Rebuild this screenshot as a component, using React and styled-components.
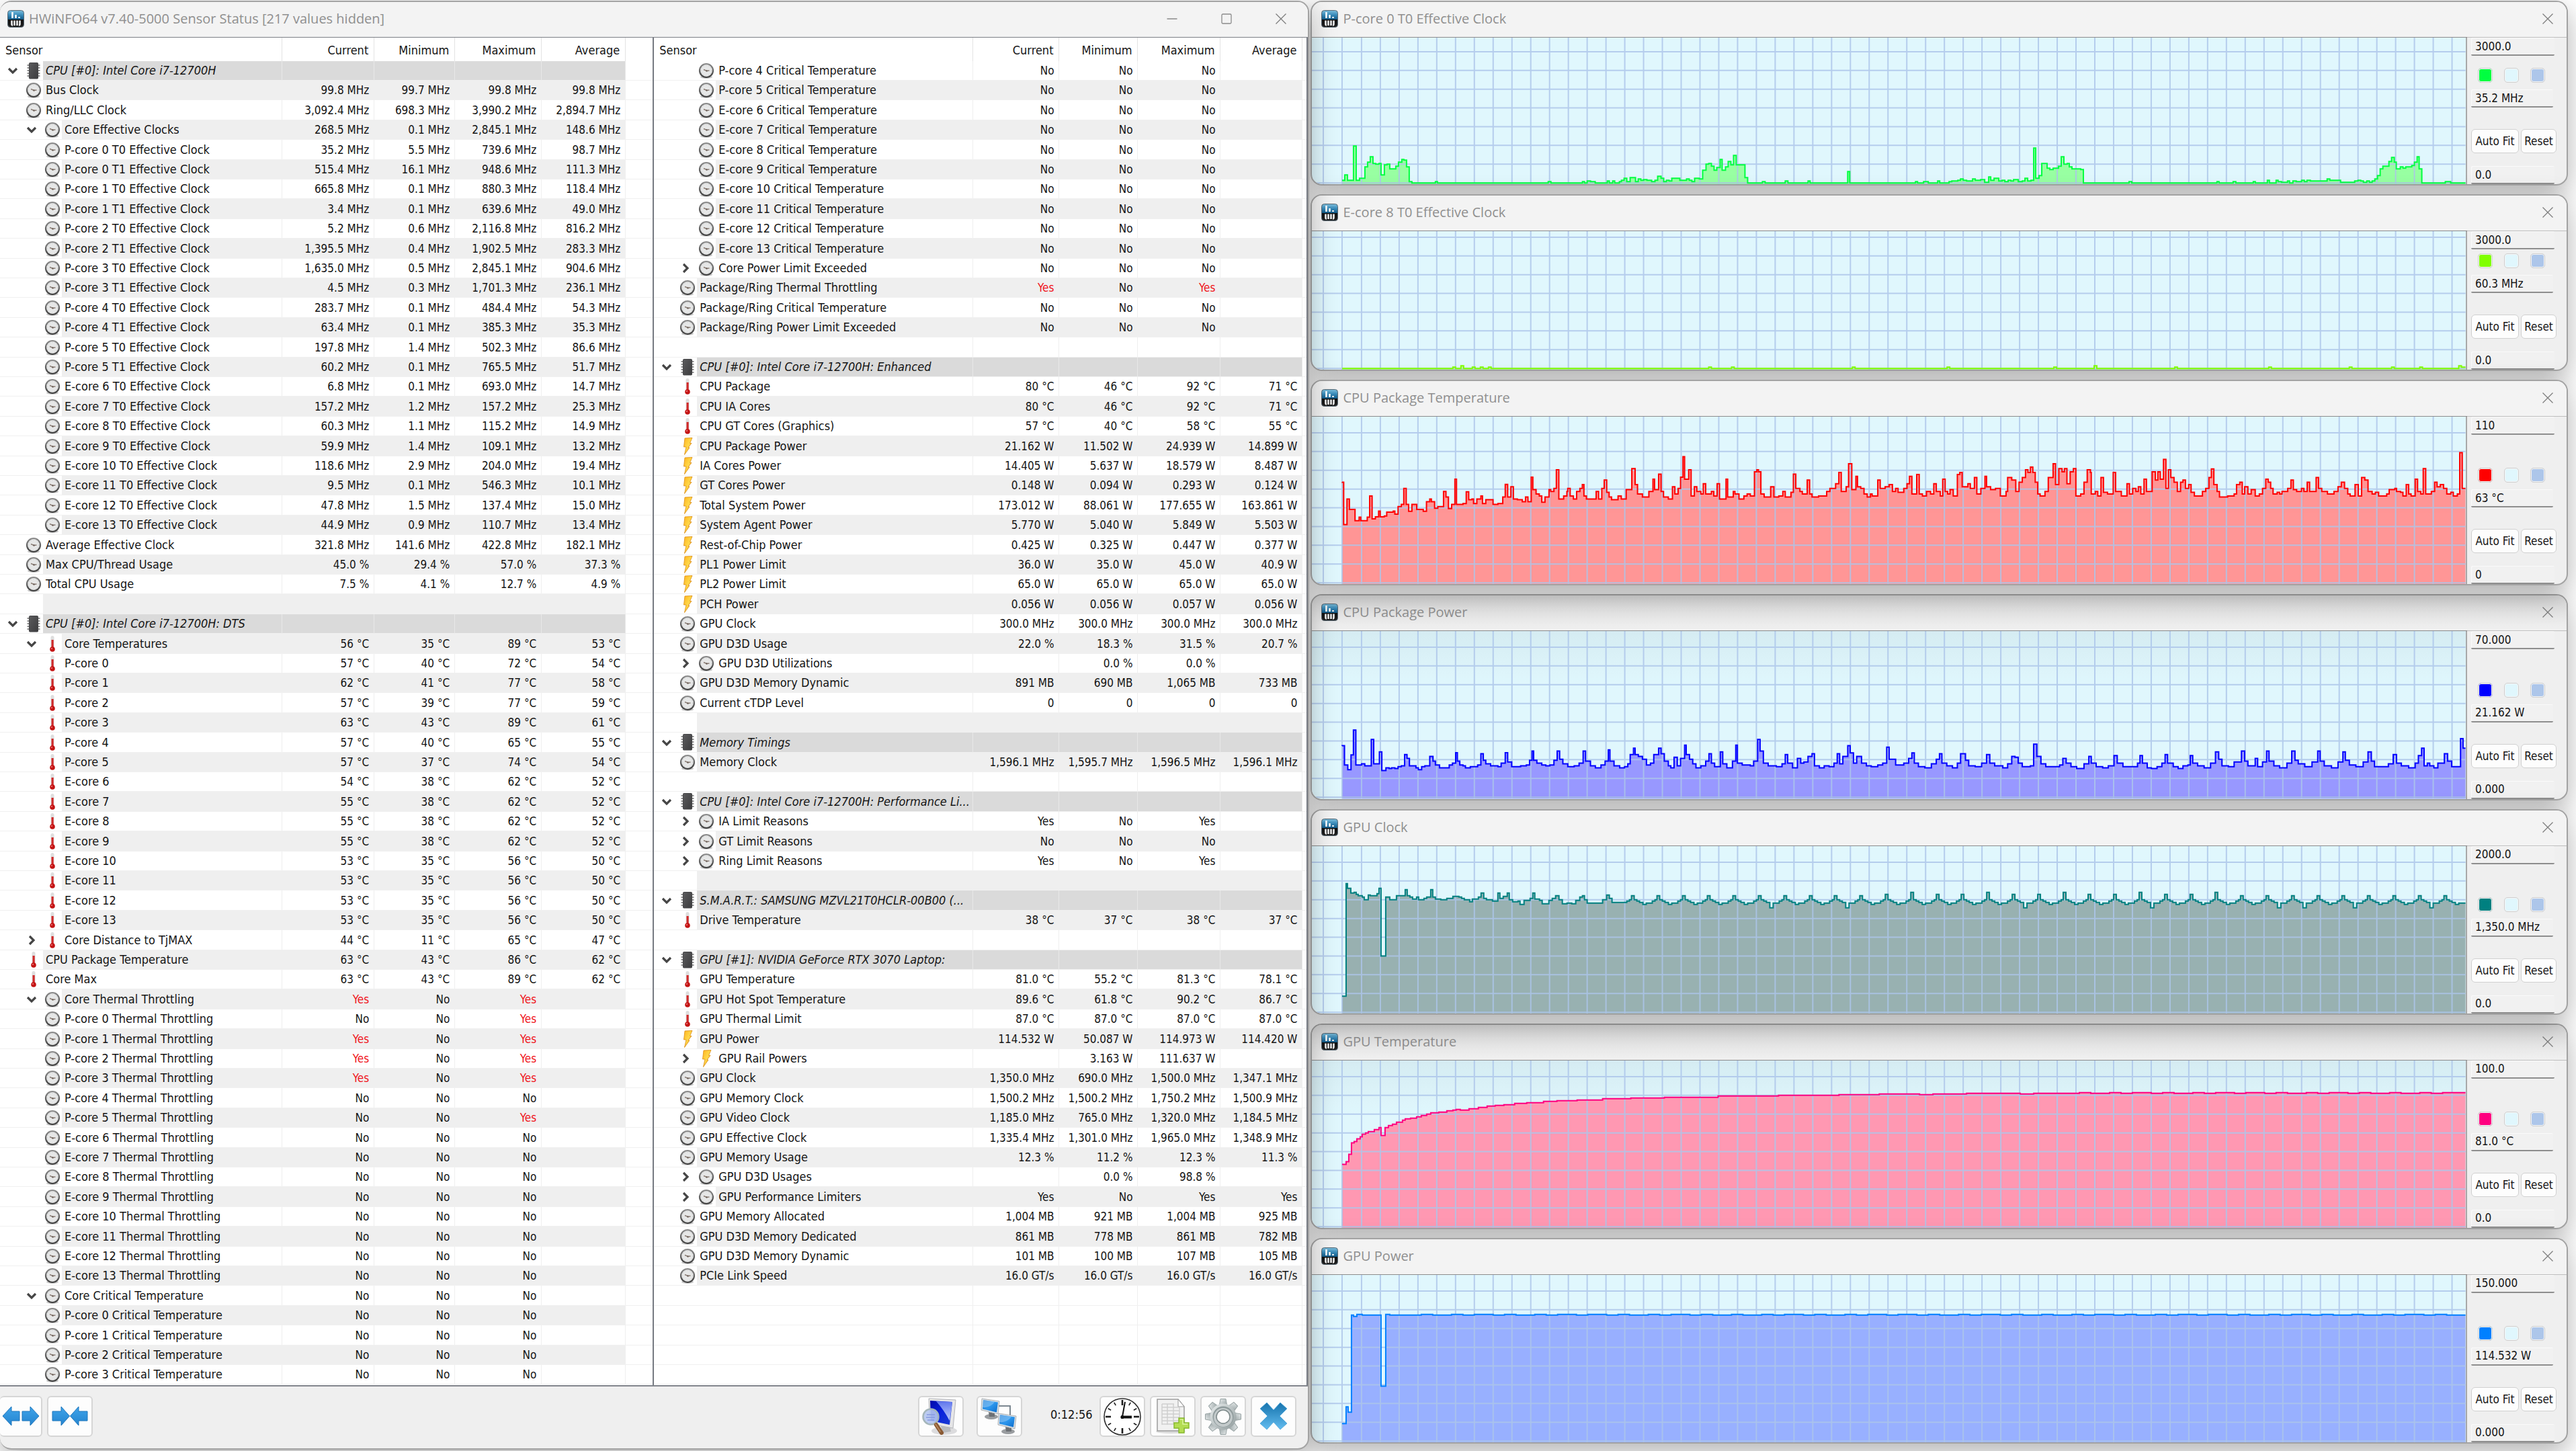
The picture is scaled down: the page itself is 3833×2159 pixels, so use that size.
import React from "react";
import styled, { createGlobalStyle, css } from "styled-components";

const GlobalStyle = createGlobalStyle`
  * {
    box-sizing: border-box;
  }

  body {
    margin: 0;
    background: #ffffff;
    color: #141414;
    font-family: "DejaVu Sans Condensed", "DejaVu Sans", Tahoma, sans-serif;
    font-size: 17px;
  }

  button, input {
    font: inherit;
    color: inherit;
  }
`;

// ---------- Data ----------

const mhz = (...v) => v.map((n) => `${n} MHz`);
const deg = (...v) => v.map((n) => `${n} °C`);
const pct = (...v) => v.map((n) => `${n} %`);
const watt = (...v) => v.map((n) => `${n} W`);
const mb = (...v) => v.map((n) => `${n} MB`);

const group = (label) => ({ kind: "group", depth: 0, icon: "chip", label, values: [], toggle: "open" });
const blank = () => ({ kind: "blank", depth: 0, values: [] });
const row = (depth, icon, label, values, toggle) => ({ kind: "row", depth, icon, label, values, toggle });
const flags = (depth, label, text, toggle) => row(depth, "clock", label, text.split(" "), toggle);

const cores = [
  "P-core 0", "P-core 1", "P-core 2", "P-core 3", "P-core 4", "P-core 5", "E-core 6",
  "E-core 7", "E-core 8", "E-core 9", "E-core 10", "E-core 11", "E-core 12", "E-core 13",
];

const effectiveClocks = [
  ["P-core 0 T0", "35.2", "5.5", "739.6", "98.7"],
  ["P-core 0 T1", "515.4", "16.1", "948.6", "111.3"],
  ["P-core 1 T0", "665.8", "0.1", "880.3", "118.4"],
  ["P-core 1 T1", "3.4", "0.1", "639.6", "49.0"],
  ["P-core 2 T0", "5.2", "0.6", "2,116.8", "816.2"],
  ["P-core 2 T1", "1,395.5", "0.4", "1,902.5", "283.3"],
  ["P-core 3 T0", "1,635.0", "0.5", "2,845.1", "904.6"],
  ["P-core 3 T1", "4.5", "0.3", "1,701.3", "236.1"],
  ["P-core 4 T0", "283.7", "0.1", "484.4", "54.3"],
  ["P-core 4 T1", "63.4", "0.1", "385.3", "35.3"],
  ["P-core 5 T0", "197.8", "1.4", "502.3", "86.6"],
  ["P-core 5 T1", "60.2", "0.1", "765.5", "51.7"],
  ["E-core 6 T0", "6.8", "0.1", "693.0", "14.7"],
  ["E-core 7 T0", "157.2", "1.2", "157.2", "25.3"],
  ["E-core 8 T0", "60.3", "1.1", "115.2", "14.9"],
  ["E-core 9 T0", "59.9", "1.4", "109.1", "13.2"],
  ["E-core 10 T0", "118.6", "2.9", "204.0", "19.4"],
  ["E-core 11 T0", "9.5", "0.1", "546.3", "10.1"],
  ["E-core 12 T0", "47.8", "1.5", "137.4", "15.0"],
  ["E-core 13 T0", "44.9", "0.9", "110.7", "13.4"],
];

const coreTemps = [
  [57, 40, 72, 54], [62, 41, 77, 58], [57, 39, 77, 59], [63, 43, 89, 61], [57, 40, 65, 55],
  [57, 37, 74, 54], [54, 38, 62, 52], [55, 38, 62, 52], [55, 38, 62, 52], [55, 38, 62, 52],
  [53, 35, 56, 50], [53, 35, 56, 50], [53, 35, 56, 50], [53, 35, 56, 50],
];

const throttling = ["No No Yes", "Yes No Yes", "Yes No Yes", "Yes No Yes", "No No No", "No No Yes"];

const leftRows = [
  group("CPU [#0]: Intel Core i7-12700H"),
  row(0, "clock", "Bus Clock", mhz("99.8", "99.7", "99.8", "99.8")),
  row(0, "clock", "Ring/LLC Clock", mhz("3,092.4", "698.3", "3,990.2", "2,894.7")),
  row(1, "clock", "Core Effective Clocks", mhz("268.5", "0.1", "2,845.1", "148.6"), "open"),
  ...effectiveClocks.map(([name, ...v]) => row(1, "clock", `${name} Effective Clock`, mhz(...v))),
  row(0, "clock", "Average Effective Clock", mhz("321.8", "141.6", "422.8", "182.1")),
  row(0, "clock", "Max CPU/Thread Usage", pct("45.0", "29.4", "57.0", "37.3")),
  row(0, "clock", "Total CPU Usage", pct("7.5", "4.1", "12.7", "4.9")),
  blank(),
  group("CPU [#0]: Intel Core i7-12700H: DTS"),
  row(1, "temp", "Core Temperatures", deg(56, 35, 89, 53), "open"),
  ...cores.map((name, i) => row(1, "temp", name, deg(...coreTemps[i]))),
  row(1, "temp", "Core Distance to TjMAX", deg(44, 11, 65, 47), "closed"),
  row(0, "temp", "CPU Package Temperature", deg(63, 43, 86, 62)),
  row(0, "temp", "Core Max", deg(63, 43, 89, 62)),
  flags(1, "Core Thermal Throttling", "Yes No Yes", "open"),
  ...cores.map((name, i) => flags(1, `${name} Thermal Throttling`, throttling[i] || "No No No")),
  flags(1, "Core Critical Temperature", "No No No", "open"),
  ...cores.slice(0, 4).map((name) => flags(1, `${name} Critical Temperature`, "No No No")),
];

const rightRows = [
  ...cores.slice(4).map((name) => flags(1, `${name} Critical Temperature`, "No No No")),
  flags(1, "Core Power Limit Exceeded", "No No No", "closed"),
  flags(0, "Package/Ring Thermal Throttling", "Yes No Yes"),
  flags(0, "Package/Ring Critical Temperature", "No No No"),
  flags(0, "Package/Ring Power Limit Exceeded", "No No No"),
  blank(),
  group("CPU [#0]: Intel Core i7-12700H: Enhanced"),
  row(0, "temp", "CPU Package", deg(80, 46, 92, 71)),
  row(0, "temp", "CPU IA Cores", deg(80, 46, 92, 71)),
  row(0, "temp", "CPU GT Cores (Graphics)", deg(57, 40, 58, 55)),
  row(0, "power", "CPU Package Power", watt("21.162", "11.502", "24.939", "14.899")),
  row(0, "power", "IA Cores Power", watt("14.405", "5.637", "18.579", "8.487")),
  row(0, "power", "GT Cores Power", watt("0.148", "0.094", "0.293", "0.124")),
  row(0, "power", "Total System Power", watt("173.012", "88.061", "177.655", "163.861")),
  row(0, "power", "System Agent Power", watt("5.770", "5.040", "5.849", "5.503")),
  row(0, "power", "Rest-of-Chip Power", watt("0.425", "0.325", "0.447", "0.377")),
  row(0, "power", "PL1 Power Limit", watt("36.0", "35.0", "45.0", "40.9")),
  row(0, "power", "PL2 Power Limit", watt("65.0", "65.0", "65.0", "65.0")),
  row(0, "power", "PCH Power", watt("0.056", "0.056", "0.057", "0.056")),
  row(0, "clock", "GPU Clock", mhz("300.0", "300.0", "300.0", "300.0")),
  row(0, "clock", "GPU D3D Usage", pct("22.0", "18.3", "31.5", "20.7")),
  row(1, "clock", "GPU D3D Utilizations", ["", "0.0 %", "0.0 %", ""], "closed"),
  row(0, "clock", "GPU D3D Memory Dynamic", mb("891", "690", "1,065", "733")),
  row(0, "clock", "Current cTDP Level", ["0", "0", "0", "0"]),
  blank(),
  group("Memory Timings"),
  row(0, "clock", "Memory Clock", mhz("1,596.1", "1,595.7", "1,596.5", "1,596.1")),
  blank(),
  group("CPU [#0]: Intel Core i7-12700H: Performance Li..."),
  flags(1, "IA Limit Reasons", "Yes No Yes", "closed"),
  flags(1, "GT Limit Reasons", "No No No", "closed"),
  flags(1, "Ring Limit Reasons", "Yes No Yes", "closed"),
  blank(),
  group("S.M.A.R.T.: SAMSUNG MZVL21T0HCLR-00B00 (..."),
  row(0, "temp", "Drive Temperature", deg(38, 37, 38, 37)),
  blank(),
  group("GPU [#1]: NVIDIA GeForce RTX 3070 Laptop:"),
  row(0, "temp", "GPU Temperature", deg("81.0", "55.2", "81.3", "78.1")),
  row(0, "temp", "GPU Hot Spot Temperature", deg("89.6", "61.8", "90.2", "86.7")),
  row(0, "temp", "GPU Thermal Limit", deg("87.0", "87.0", "87.0", "87.0")),
  row(0, "power", "GPU Power", watt("114.532", "50.087", "114.973", "114.420")),
  row(1, "power", "GPU Rail Powers", ["", "3.163 W", "111.637 W", ""], "closed"),
  row(0, "clock", "GPU Clock", mhz("1,350.0", "690.0", "1,500.0", "1,347.1")),
  row(0, "clock", "GPU Memory Clock", mhz("1,500.2", "1,500.2", "1,750.2", "1,500.9")),
  row(0, "clock", "GPU Video Clock", mhz("1,185.0", "765.0", "1,320.0", "1,184.5")),
  row(0, "clock", "GPU Effective Clock", mhz("1,335.4", "1,301.0", "1,965.0", "1,348.9")),
  row(0, "clock", "GPU Memory Usage", pct("12.3", "11.2", "12.3", "11.3")),
  row(1, "clock", "GPU D3D Usages", ["", "0.0 %", "98.8 %", ""], "closed"),
  row(1, "clock", "GPU Performance Limiters", ["Yes", "No", "Yes", "Yes"], "closed"),
  row(0, "clock", "GPU Memory Allocated", mb("1,004", "921", "1,004", "925")),
  row(0, "clock", "GPU D3D Memory Dedicated", mb("861", "778", "861", "782")),
  row(0, "clock", "GPU D3D Memory Dynamic", mb("101", "100", "107", "105")),
  row(0, "clock", "PCIe Link Speed", ["16.0 GT/s", "16.0 GT/s", "16.0 GT/s", "16.0 GT/s"]),
  ...Array.from({ length: 5 }, () => ({ kind: "empty", depth: 0, values: [] })),
];

// Traces are step points "x,y" inside a frame of [left, top, right, bottom]
const parse = (text) => text.trim().split(/\s+/).map((p) => p.split(",").map(Number));

const pcoreTrace = parse(`
0,4 4,12 8,4 17,55 21,4 26,7 34,24 38,31 42,39 46,29 50,28 55,29 58,12 63,27 67,28 71,21 80,25 84,31 89,35 92,34
96,24 100,2 104,0 139,2 142,0 307,2 311,0 358,2 361,0 365,3 370,2 377,0 395,3 398,0 403,3 406,0 413,2 416,4 420,7
424,2 429,8 437,2 441,6 445,4 449,5 454,4 461,2 466,4 470,10 475,7 479,2 483,4 487,3 491,7 503,4 513,6 517,4 521,2
525,7 532,6 537,19 542,28 546,29 550,25 554,19 558,23 563,35 566,19 571,24 575,32 579,27 583,41 587,27 600,8 604,0
626,2 630,0 660,3 664,0 694,3 697,0 753,17 756,0 854,2 857,0 866,2 873,0 887,3 890,0 904,2 908,3 917,4 921,6 925,4
930,3 939,6 943,4 951,5 957,1 963,9 966,4 971,7 978,3 983,4 987,2 992,4 996,3 1000,5 1007,2 1013,3 1017,7 1021,3
1026,4 1030,52 1033,7 1038,11 1042,29 1050,22 1054,20 1059,22 1067,25 1071,39 1075,28 1080,29 1083,24 1087,21
1100,20 1104,0 1172,2 1176,0 1303,2 1306,0 1327,2 1331,0 1357,2 1360,0 1378,4 1381,0 1391,4 1394,2 1399,1 1408,3
1411,0 1416,3 1421,2 1429,4 1433,2 1437,4 1442,3 1467,6 1471,4 1487,1 1508,3 1513,4 1517,3 1521,1 1526,3 1530,1
1534,3 1538,6 1542,11 1546,21 1550,25 1559,32 1563,38 1567,31 1570,21 1576,24 1580,22 1584,24 1593,26 1597,31
1601,39 1604,21 1608,0 1643,2 1651,0`);

const ecoreTrace = parse(`
0,0 165,2 169,0 177,4 181,0 194,2 198,0 206,2 210,0 218,2 222,0 546,2 550,0 580,2 584,0 760,2 764,0 901,2 905,0
1060,2 1064,0 1120,4 1124,0 1240,2 1244,0 1380,2 1384,0 1500,2 1504,0 1563,2 1567,0 1605,2 1609,0 1663,4 1667,2`);

const packageTempTrace = parse(`
48,387 50,541 54,448 57,486 64,527 69,514 71,527 79,514 82,437 85,520 89,513 93,492 95,513 100,510 103,496 111,492
113,503 117,476 121,468 124,410 127,468 130,493 134,468 140,486 148,493 152,458 156,448 158,458 162,482 166,476
173,421 176,441 179,483 183,468 187,376 189,468 197,465 201,422 204,451 208,448 210,465 214,448 219,437 221,465
225,451 234,468 240,465 246,441 249,395 252,441 256,404 259,448 264,451 270,458 274,441 277,458 281,369 283,414
287,430 291,437 294,460 298,441 303,414 305,421 309,410 312,342 315,448 321,437 325,421 326,410 329,437 333,448
337,421 341,410 344,396 346,437 349,448 361,421 364,448 368,410 371,379 374,424 377,441 380,451 388,437 392,448
398,414 405,338 409,396 412,430 418,441 426,421 431,376 433,414 438,358 441,421 444,441 450,448 455,404 458,430
462,410 465,369 468,294 470,376 475,342 478,437 482,404 485,421 490,430 493,393 496,430 503,421 506,437 510,393
513,448 521,376 523,441 530,421 532,430 537,448 543,437 547,430 551,437 556,349 559,342 561,349 564,430 568,441
576,404 580,441 586,437 591,421 594,441 601,424 604,358 607,410 612,421 615,430 621,379 624,430 627,441 635,437
645,421 649,410 656,393 660,352 663,421 669,404 672,320 676,414 681,366 683,404 687,410 691,430 695,441 699,430
701,437 708,379 711,410 717,404 722,396 726,421 730,410 733,424 740,410 744,393 747,366 750,430 756,359 759,430
763,437 768,421 773,430 777,393 780,421 785,437 788,376 791,421 794,430 797,414 801,437 806,359 809,352 812,404
819,393 822,410 827,370 830,430 835,410 840,366 842,404 847,414 853,410 859,437 866,421 868,370 873,379 878,421
882,387 886,370 890,342 893,352 896,332 899,352 902,387 905,430 908,437 914,421 918,370 924,320 927,396 931,338
935,349 938,338 941,393 945,349 949,338 952,437 958,430 962,387 966,342 970,352 971,430 976,421 979,437 983,370
986,424 991,430 998,352 1001,421 1008,437 1015,393 1018,430 1022,410 1026,421 1029,404 1032,430 1036,376 1039,421
1046,349 1050,379 1053,349 1056,376 1060,304 1063,410 1066,342 1069,370 1073,387 1077,421 1081,387 1084,379
1087,410 1091,396 1094,424 1098,437 1108,421 1112,410 1116,370 1119,339 1122,396 1126,421 1129,441 1139,437
1147,430 1150,396 1154,387 1157,430 1160,404 1164,430 1168,414 1173,437 1178,430 1182,410 1186,376 1189,387
1192,410 1195,430 1200,424 1203,430 1206,421 1213,410 1217,379 1220,414 1224,421 1230,410 1233,421 1237,387
1240,421 1248,370 1251,410 1255,421 1262,430 1270,421 1275,404 1279,387 1283,410 1287,430 1290,437 1296,396
1300,437 1304,370 1308,379 1312,421 1317,430 1321,424 1325,437 1335,430 1338,414 1345,410 1347,421 1352,424
1355,437 1359,396 1362,430 1365,437 1370,376 1373,421 1377,430 1380,338 1383,430 1390,421 1394,387 1397,404
1401,396 1405,410 1409,430 1414,424 1417,437 1422,430 1425,280 1428,410`);

const packagePowerTrace = parse(`
48,1348 51,1418 55,1435 59,1381 62,1291 65,1418 72,1414 76,1421 84,1325 87,1414 94,1370 97,1438 102,1428 106,1431
109,1428 113,1431 117,1424 121,1421 125,1380 128,1394 131,1421 139,1428 142,1435 146,1424 150,1421 156,1387
160,1404 163,1418 168,1428 180,1418 184,1411 188,1373 190,1404 193,1418 197,1421 200,1428 206,1424 215,1418
219,1377 222,1401 225,1414 231,1421 240,1424 244,1411 249,1373 252,1407 257,1424 268,1421 275,1418 279,1401
282,1367 284,1401 288,1411 294,1418 299,1421 304,1418 309,1401 313,1367 316,1397 320,1414 326,1424 334,1421
340,1411 345,1367 348,1404 354,1421 360,1428 367,1418 372,1404 376,1363 378,1404 383,1421 390,1428 396,1424
400,1414 403,1380 407,1357 409,1380 413,1387 418,1397 423,1418 428,1411 432,1380 438,1357 441,1377 445,1404
450,1421 453,1428 457,1390 461,1421 465,1394 470,1346 472,1380 476,1397 480,1414 484,1428 490,1421 496,1404
500,1377 503,1411 507,1424 514,1370 517,1414 522,1428 529,1404 533,1346 535,1411 541,1418 551,1421 555,1404
560,1325 563,1367 567,1411 573,1421 583,1424 590,1414 594,1380 597,1411 603,1428 609,1394 613,1411 617,1407
622,1387 627,1377 630,1421 636,1428 642,1421 648,1424 654,1411 658,1377 661,1414 665,1387 671,1348 674,1374
678,1411 682,1387 688,1411 694,1421 700,1424 708,1418 714,1411 719,1353 722,1397 730,1418 740,1411 746,1394
750,1374 753,1411 758,1424 766,1428 774,1414 780,1397 784,1377 787,1411 793,1421 800,1428 806,1411 810,1377
816,1401 820,1421 828,1424 836,1411 842,1380 846,1411 852,1421 862,1428 868,1414 873,1387 877,1390 881,1411
886,1424 896,1421 900,1342 904,1387 909,1414 915,1424 932,1418 936,1394 940,1411 946,1424 953,1431 962,1414
968,1387 971,1411 977,1424 985,1428 992,1421 999,1384 1003,1411 1010,1424 1028,1411 1031,1384 1034,1411
1040,1428 1045,1431 1052,1424 1058,1411 1062,1380 1065,1411 1072,1424 1078,1431 1084,1421 1090,1418 1093,1384
1096,1411 1102,1421 1110,1428 1118,1411 1124,1370 1128,1397 1132,1421 1140,1424 1147,1407 1156,1367 1160,1404
1164,1421 1173,1394 1176,1424 1182,1407 1187,1367 1190,1404 1196,1421 1203,1428 1212,1411 1218,1367 1222,1401
1226,1414 1234,1424 1243,1407 1250,1367 1253,1404 1258,1421 1267,1428 1275,1407 1281,1370 1284,1401 1289,1418
1297,1424 1306,1407 1312,1370 1316,1404 1320,1424 1337,1414 1343,1380 1347,1411 1353,1421 1362,1428 1370,1411
1374,1384 1378,1357 1381,1421 1385,1411 1388,1421 1393,1428 1398,1411 1406,1377 1410,1404 1415,1424 1426,1322
1429,1357`);

const clockHead = parse(`
0,24 6,192 8,185 13,178 18,179 21,176 24,174 30,172 33,168 39,175 42,174 52,177 55,185 58,84 65,172 71,168 81,174
94,183 97,174 101,172 105,169 111,172 114,168 122,170 126,172 132,183 135,172 139,169 147,168 156,170 165,173
174,172 178,170 182,168 190,165 194,169 203,172 207,178 211,170 215,168 224,166 232,178 235,170 240,173 246,178
249,168 254,165 262,166 265,161 271,167 280,170 284,178 287,169 294,167 298,162 308,167 313,170 318,174 323,168
328,162 335,163 342,162 348,167 354,172 358,174 361,168 365,163 388,168 394,175 398,170 402,164`);

const clockTail = Array.from({ length: 33 }, (_, k) => {
  const x = 430 + Math.round(k * 37.8);
  const peak = k > 9 && k < 24 ? (k % 3 === 2 ? 179 : 176) : 174;
  const dip = [5, 8, 15, 20, 25, 26, 28, 31].includes(k) ? 156 : 161;
  return [[x - 6, 166], [x - 2, 168], [x + 1, peak], [x + 5, 168], [x + 9, 166], [x + 13, 164], [x + 18, dip], [x + 23, 163]];
}).flat();

const gpuTempHead = parse(`
0,93 6,97 10,108 14,125 18,127 22,131 27,134 30,138 35,140 39,142 48,145 55,148 58,136 64,148 69,151 75,153 81,156
90,159 94,161 102,162 111,164 118,166 126,168 132,170 144,171 156,173 165,174 170,175 176,174 189,176 203,178
216,180 228,181 241,182 257,184 275,185 300,187 320,188 350,189 388,191 430,192 480,193 560,195 650,196 740,197
800,198 860,197 880,198 930,199 1010,198 1030,199`);

const ripple = (from, count, low) =>
  Array.from({ length: count }, (_, k) => [from + k * 21 + ((k * 7) % 11), low + (k % 2)]);

const gpuTempTrace = [...gpuTempHead, ...ripple(1070, 28, 199)];
const gpuPowerTrace = [...parse("0,26 6,51 9,43 14,188 17,186 22,189 30,188 58,82 65,189 71,188"), ...ripple(90, 75, 188)];

const graphs = [
  { title: "P-core 0 T0 Effective Clock", share: 275, plot: 219, max: "3000.0", min: "0.0", value: "35.2 MHz", line: "#00ff40", fill: "#98ffa2", frame: [0, 219, 1673, 0], trace: pcoreTrace },
  { title: "E-core 8 T0 Effective Clock", share: 263, plot: 207, max: "3000.0", min: "0.0", value: "60.3 MHz", line: "#80ff00", fill: "#c0ff9a", frame: [0, 207, 1673, 0], trace: ecoreTrace },
  { title: "CPU Package Temperature", share: 306, plot: 250, max: "110", min: "0", value: "63 °C", line: "#ff0000", fill: "#ff9696", frame: [48, 144, 1432, 753], trace: packageTempTrace, raised: true },
  { title: "CPU Package Power", share: 306, plot: 250, max: "70.000", min: "0.000", value: "21.162 W", line: "#0000ff", fill: "#9898ff", frame: [48, 926, 1432, 1535], trace: packagePowerTrace, shaded: true },
  { title: "GPU Clock", share: 306, plot: 250, max: "2000.0", min: "0.0", value: "1,350.0 MHz", line: "#008080", fill: "#98b1b1", frame: [0, 250, 1673, 0], trace: [...clockHead, ...clockTail], raised: true },
  { title: "GPU Temperature", share: 306, plot: 250, max: "100.0", min: "0.0", value: "81.0 °C", line: "#ff0080", fill: "#ff98b2", frame: [0, 250, 1673, 0], trace: gpuTempTrace, shaded: true },
  { title: "GPU Power", share: 306, plot: 250, max: "150.000", min: "0.000", value: "114.532 W", line: "#0080ff", fill: "#98b0ff", frame: [0, 250, 1673, 0], trace: gpuPowerTrace, raised: true },
];

// ---------- Layout ----------

const Desktop = styled.main`
  display: grid;
  grid-template-columns: minmax(0, 1949fr) minmax(0, 1871fr);
  gap: 2px;
  min-height: 100vh;
  padding: 1px 12px 0 0;
  overflow: hidden;
`;

const Window = styled.section`
  position: relative;
  z-index: ${(p) => (p.$raised ? 2 : 1)};
  display: flex;
  flex-direction: column;
  min-width: 0;
  min-height: 0;
  overflow: hidden;
  border: 2px solid #a3a3a3;
  border-radius: 17px;
  background: #efefef;
  box-shadow: 0 14px 40px rgba(0, 0, 0, 0.3);
`;

const SensorWindow = styled(Window)`
  z-index: 3;
  margin-bottom: 2px;
  border-left: 0;
`;

const GraphStack = styled.div`
  display: grid;
  grid-template-rows: ${graphs.map((g) => `minmax(0, ${g.share}fr)`).join(" ")};
  gap: 13px;
  padding-bottom: 11px;
`;

const TitleBar = styled.header`
  display: flex;
  align-items: center;
  flex: none;
  gap: 7px;
  height: 52px;
  padding: 0 0 2px ${(p) => (p.$main ? 11 : 14)}px;
  color: #8f8f8f;
  background: ${(p) => (p.$shaded ? "linear-gradient(#dcdcdc, #f0f0f0)" : "#f3f3f3")};
`;

const Title = styled.h1`
  flex: 1;
  margin: 0;
  font-family: "Open Sans", "Segoe UI", sans-serif;
  font-size: 20px;
  font-weight: 400;
  line-height: 28px;
`;

const CaptionButton = styled.button`
  display: grid;
  place-items: center;
  width: ${(p) => (p.$wide ? 81 : 56)}px;
  height: 100%;
  margin-left: -7px;
  padding: 0;
  border: 0;
  background: none;
`;

const CaptionButtons = styled.div`
  display: flex;
  gap: 7px;
  height: 100%;
`;

// ---------- Sensor list ----------

const Panes = styled.div`
  display: grid;
  grid-template-columns: minmax(0, 1fr) minmax(0, 1fr);
  flex: 1;
  border-top: 1px solid #7c7f86;
  border-bottom: 2px solid #82858c;
  background: #ffffff;
`;

const Pane = styled.div`
  border-right: 2px solid #767a82;
`;

const SensorTable = styled.table`
  width: 100%;
  table-layout: fixed;
  border-spacing: 0;
  line-height: 26px;
  white-space: nowrap;
`;

const Col = styled.col`
  width: ${(p) => p.$width}px;
`;

const HeadCell = styled.th`
  height: 35px;
  padding: 2px 8px 0;
  border-right: 1px solid ${(p) => (p.$last ? "transparent" : "#e3e3e3")};
  font-size: 18px;
  font-weight: 400;
  text-align: ${(p) => p.$align || "right"};
`;

const shade = { group: "#dadada", odd: "#efefef", none: "#ffffff" };

// Two rows in five are a pixel taller, as the list view scales at 150%
const Row = styled.tr`
  height: 29px;

  &:nth-child(5n + 3),
  &:nth-child(5n) {
    height: 30px;
  }
`;

const cell = css`
  padding: 0 7px 0 0;
  border-right: 1px solid #efefef;
  border-bottom: 1px solid #f0f0f0;
`;

const NameCell = styled.td`
  ${cell}
  background: linear-gradient(to right, #ffffff ${(p) => 64 + p.$depth * 28}px, ${(p) => shade[p.$shade]} 0);
  border-right-color: ${(p) => (p.$shade === "group" ? "#e8e8e8" : "#efefef")};
`;

const ValueCell = styled.td`
  ${cell}
  background: ${(p) => shade[p.$shade]};
  border-right-color: ${(p) => (p.$shade === "group" ? "#e8e8e8" : "#efefef")};
  color: ${(p) => (p.$alert ? "#f01420" : "inherit")};
  text-align: right;
`;

const FillCell = styled.td`
  ${cell}
  border-right: 0;
`;

const NameLine = styled.div`
  display: grid;
  grid-template-columns: 26px 24px minmax(0, 1fr);
  align-items: center;
  justify-items: center;
  column-gap: 6px;
  height: 26px;
  padding-left: ${(p) => 6 + p.$depth * 28}px;
`;

const Toggle = styled.button`
  display: grid;
  place-items: center;
  width: 24px;
  height: 24px;
  padding: 0;
  border: 0;
  background: none;
`;

const Label = styled.span`
  justify-self: start;
  font-size: 18px;
  font-style: ${(p) => (p.$group ? "italic" : "normal")};
`;

// ---------- Toolbar ----------

const Toolbar = styled.footer`
  display: flex;
  align-items: center;
  flex: none;
  gap: 7px;
  height: 92px;
  padding: 0 17px 4px 0;
`;

const Spacer = styled.div`
  flex: 1;
`;

const ToolButton = styled.button`
  display: grid;
  place-items: center;
  width: 68px;
  height: 61px;
  padding: 0;
  border: 2px solid #d6d6d6;
  border-radius: 6px;
  background: #fdfdfd;
  margin-right: ${(p) => p.$after || 0}px;

  &:first-child {
    width: 63px;
    border-left: 0;
  }
`;

const Elapsed = styled.time`
  padding: 0 4px 6px 35px;
  font-size: 18px;
`;

// ---------- Graph windows ----------

const GraphBody = styled.div`
  display: grid;
  grid-template-columns: minmax(0, 1fr) 148px;
  flex: 1;
  min-height: 0;
  border-top: 1px solid #bdbdbd;
`;

// Zero height keeps the drawing's aspect ratio from stretching its row
const Plot = styled.svg`
  display: block;
  width: 100%;
  height: 0;
  min-height: 100%;
  border-right: 2px solid #a8a8a8;
  box-shadow: 0 -1px 0 #8c8c8c;
  background: ${(p) => (p.$shaded ? "linear-gradient(#d5ecf2, #e0f7fd 80px)" : "#e0f7fd")};
`;

const Side = styled.div`
  display: flex;
  flex-direction: column;
  align-items: flex-start;
  min-height: 0;
  padding-left: 6px;
`;

const Field = styled.input`
  width: 124px;
  height: 27px;
  padding: 0 0 0 6px;
  border: 0;
  border-bottom: 2px solid #8e8e8e;
  border-radius: 2px;
  background: #f1f1f1;
  box-shadow: inset 1px 1px 0 #fafafa;
  outline: 0;
`;

const ValueField = styled(Field)`
  width: 122px;
  margin: 10px 0 32px;
`;

const Swatches = styled.div`
  display: flex;
  gap: 17px;
  margin: auto 0 0 10px;
`;

const Swatch = styled.button`
  width: 22px;
  height: 22px;
  padding: 0;
  border: 1px solid #cfcfcf;
  border-radius: 5px;
  background: ${(p) => p.$color};
  box-shadow: inset 0 0 0 1px #f6f6f6;
`;

const Actions = styled.div`
  display: flex;
  gap: 3px;
  margin-bottom: 19px;
`;

const Action = styled.button`
  width: ${(p) => p.$width}px;
  height: 36px;
  padding: 0;
  border: 1px solid #d0d0d0;
  border-radius: 6px;
  background: #fdfdfd;
  white-space: nowrap;
`;

// ---------- Icons ----------

const Defs = styled.svg`
  position: absolute;
  width: 0;
  height: 0;
`;

function SharedGradients() {
  return (
    <Defs aria-hidden="true">
      <defs>
        <linearGradient id="logo" x1="0" y1="0" x2="0" y2="1">
          <stop offset="0" stopColor="#7fc0de" />
          <stop offset="0.25" stopColor="#3d8fbd" />
          <stop offset="0.55" stopColor="#0f5684" />
          <stop offset="0.56" stopColor="#111" />
          <stop offset="1" stopColor="#222" />
        </linearGradient>
        <linearGradient id="chip" x1="0" y1="0" x2="1" y2="1">
          <stop offset="0" stopColor="#5b5b5d" />
          <stop offset="1" stopColor="#3c3c3e" />
        </linearGradient>
        <linearGradient id="ring" x1="0" y1="0" x2="0" y2="1">
          <stop offset="0" stopColor="#8b8b8b" />
          <stop offset="1" stopColor="#3f3f3f" />
        </linearGradient>
        <linearGradient id="bolt" x1="0" y1="0" x2="1" y2="1">
          <stop offset="0" stopColor="#ffb520" />
          <stop offset="0.5" stopColor="#ffd84a" />
          <stop offset="1" stopColor="#e87400" />
        </linearGradient>
        <linearGradient id="arrow" x1="0" y1="0" x2="0" y2="1">
          <stop offset="0" stopColor="#3fa4ea" />
          <stop offset="1" stopColor="#2484cf" />
        </linearGradient>
        <linearGradient id="screen" x1="0" y1="0" x2="1" y2="1">
          <stop offset="0" stopColor="#1f6fc4" />
          <stop offset="0.5" stopColor="#2d97ee" />
          <stop offset="1" stopColor="#0d6cc9" />
        </linearGradient>
        <linearGradient id="deep" x1="0" y1="0" x2="1" y2="1">
          <stop offset="0" stopColor="#0008a8" />
          <stop offset="0.5" stopColor="#0a22dd" />
          <stop offset="1" stopColor="#1b3fd0" />
        </linearGradient>
        <linearGradient id="glare" x1="0" y1="0" x2="0" y2="1">
          <stop offset="0" stopColor="#6f86f2" />
          <stop offset="1" stopColor="#dfe8ff" />
        </linearGradient>
        <linearGradient id="silver" x1="0" y1="0" x2="1" y2="1">
          <stop offset="0" stopColor="#e9eded" />
          <stop offset="0.5" stopColor="#bcc4c5" />
          <stop offset="1" stopColor="#8f9a9b" />
        </linearGradient>
        <linearGradient id="cross" x1="0" y1="0" x2="0" y2="1">
          <stop offset="0" stopColor="#1673ad" />
          <stop offset="1" stopColor="#63bdf0" />
        </linearGradient>
      </defs>
    </Defs>
  );
}

const LogoIcon = () => (
  <svg width="25" height="26" viewBox="0 0 25 26" aria-hidden="true">
    <rect x="0.5" y="0.5" width="24" height="25" rx="4" fill="url(#logo)" stroke="#5a6a75" />
    <path d="M7.5 3v9M12.5 7v5M17.5 10v2" stroke="#fff" strokeWidth="2.6" />
    <path d="M6.5 15.5v5q0 2 1.500 2M10.500 15.5v7.500M14.500 15.5v7.500M18.500 15.5v5q0 2-1.500 2" fill="none" stroke="#f2f2f2" strokeWidth="2.600" />
  </svg>
);

const CloseGlyph = () => (
  <svg width="16" height="16" viewBox="0 0 16 16" aria-hidden="true">
    <path d="M0.5 0.5l15 15M15.5 0.5l-15 15" stroke="#7d7d7d" strokeWidth="1.3" />
  </svg>
);

const MinimizeGlyph = () => (
  <svg width="16" height="16" viewBox="0 0 16 16" aria-hidden="true">
    <path d="M0.5 8h15" stroke="#8a8a8a" strokeWidth="1.3" />
  </svg>
);

const MaximizeGlyph = () => (
  <svg width="16" height="16" viewBox="0 0 16 16" aria-hidden="true">
    <rect x="1" y="1" width="14" height="14" rx="1.5" fill="none" stroke="#8a8a8a" strokeWidth="1.3" />
  </svg>
);

const ToggleGlyph = ({ open }) => (
  <svg width="18" height="18" viewBox="0 0 18 18" aria-hidden="true">
    <path d={open ? "M3 6l6 6 6-6" : "M6 3l6 6-6 6"} fill="none" stroke="#454545" strokeWidth="3.2" />
  </svg>
);

const rowIcons = {
  clock: (
    <svg width="24" height="26" viewBox="0 0 24 26" aria-hidden="true">
      <ellipse cx="12" cy="22.5" rx="9" ry="2.5" fill="#c9c9c9" />
      <circle cx="12" cy="13" r="10" fill="#e6e7e7" stroke="url(#ring)" strokeWidth="2.2" />
      <circle cx="12" cy="13" r="7.8" fill="none" stroke="#bcbcbc" strokeWidth="1" strokeDasharray="1 3" />
      <path d="M8 11.500l4.500 2 4-0.500" fill="none" stroke="#8a7c74" strokeWidth="1.4" />
      <circle cx="12.5" cy="13.5" r="1.2" fill="#6d6058" />
    </svg>
  ),
  temp: (
    <svg width="10" height="26" viewBox="0 0 10 26" aria-hidden="true">
      <rect x="2.5" y="1" width="5" height="20" rx="2.5" fill="#dedede" />
      <rect x="3.5" y="7" width="3.2" height="14" fill="#cf2a2a" />
      <circle cx="5" cy="21" r="3.8" fill="#c41414" />
      <circle cx="4" cy="20" r="1" fill="#ef8a8a" />
    </svg>
  ),
  power: (
    <svg width="16" height="26" viewBox="0 0 16 26" aria-hidden="true">
      <path d="M4 1L15 0.5 11.500 8.500h2.500L9 15h2L3.500 25.500 6 14H2.500z" fill="url(#bolt)" stroke="#d98a10" strokeWidth="0.8" />
    </svg>
  ),
  chip: (
    <svg width="20" height="25" viewBox="0 0 20 25" aria-hidden="true">
      <path d="M0.5 4h19M0.5 8h19M0.5 12h19M0.5 16h19M0.5 20h19" stroke="#8f8f8f" strokeWidth="2" />
      <rect x="3.5" y="0.5" width="13" height="23.5" rx="1" fill="url(#chip)" stroke="#474749" />
    </svg>
  ),
};

const ExpandIcon = () => (
  <svg width="56" height="32" viewBox="0 0 56 32" aria-hidden="true">
    <path d="M1 16L14 2v7h12v14H14v7z" fill="url(#arrow)" stroke="#1f76bc" strokeWidth="1" />
    <path d="M55 16L42 2v7H30v14h12v7z" fill="url(#arrow)" stroke="#1f76bc" strokeWidth="1" />
  </svg>
);

const ShrinkIcon = () => (
  <svg width="54" height="32" viewBox="0 0 54 32" aria-hidden="true">
    <path d="M26.5 16L14 2v7H1v14h13v7z" fill="url(#arrow)" stroke="#1f76bc" strokeWidth="1" />
    <path d="M27.5 16L40 2v7h13v14H40v7z" fill="url(#arrow)" stroke="#1f76bc" strokeWidth="1" />
  </svg>
);

const InspectIcon = () => (
  <svg width="58" height="56" viewBox="0 0 58 56" aria-hidden="true">
    <ellipse cx="34" cy="50" rx="19" ry="6" fill="#dcdcde" />
    <path d="M28 40l14 2 2 9-12 2z" fill="#b9bbbe" />
    <path d="M11 2l40 2-4 42-34-6z" fill="#e6e6e8" stroke="#b3b4b8" />
    <path d="M13 5l33 2-4 34-28-6z" fill="url(#deep)" />
    <path d="M22 6l24 1-4 28C36 24 30 15 22 6z" fill="url(#glare)" opacity="0.85" />
    <circle cx="14" cy="29" r="11.5" fill="#b4c5f0" fillOpacity="0.9" stroke="#a5b6ba" strokeWidth="2.5" />
    <path d="M8 26h12M7 30h13M9 34h10" stroke="#8699e0" strokeWidth="1.5" />
    <path d="M22 41l8 12" stroke="#8a5a34" strokeWidth="6" strokeLinecap="round" />
    <path d="M21 40l7 11" stroke="#b98a5e" strokeWidth="1.5" strokeLinecap="round" />
  </svg>
);

const Monitor = ({ x, y }) => (
  <g transform={`translate(${x} ${y})`}>
    <ellipse cx="15" cy="27" rx="10" ry="4" fill="#9a9da0" />
    <path d="M11 20l9 2v5h-8z" fill="#6c7074" />
    <path d="M1 0l26 4-2 19L0 17z" fill="#dfe3e6" stroke="#9aa0a5" strokeWidth="0.8" />
    <path d="M3 2l22 3.5-2 15L2 15.5z" fill="url(#screen)" />
    <path d="M3 2l17 2.7C17 10 9 14 2 13z" fill="#8cc8f8" opacity="0.6" />
  </g>
);

const NetworkIcon = () => (
  <svg width="56" height="56" viewBox="0 0 56 56" aria-hidden="true">
    <path d="M26 13h18v14" fill="none" stroke="#7b8790" strokeWidth="2" />
    <Monitor x={1} y={2} />
    <Monitor x={26} y={24} />
  </svg>
);

const ClockIcon = () => (
  <svg width="58" height="58" viewBox="0 0 58 58" aria-hidden="true">
    <circle cx="29" cy="29" r="27" fill="#fff" stroke="#2e2e2e" strokeWidth="1.6" />
    {Array.from({ length: 12 }, (_, i) => (
      <path
        key={i}
        d={i % 3 ? "M29 4.5v5" : "M29 4v8"}
        stroke="#1c1c1c"
        strokeWidth={i % 3 ? 1.6 : 2.6}
        transform={`rotate(${i * 30} 29 29)`}
      />
    ))}
    <path d="M29 29L33 7" stroke="#111" strokeWidth="2" />
    <path d="M27 29.5h16" stroke="#111" strokeWidth="4" />
    <circle cx="29" cy="29.5" r="2.6" fill="#111" />
  </svg>
);

const ReportIcon = () => (
  <svg width="54" height="56" viewBox="0 0 54 56" aria-hidden="true">
    <ellipse cx="24" cy="51" rx="22" ry="3" fill="#dcdcdc" />
    <path d="M4 3h31l9 11v36H4z" fill="#f1f1f1" stroke="#9c9c9c" strokeWidth="1.5" />
    <path d="M35 3v11h9z" fill="#fff" stroke="#9c9c9c" />
    <path d="M11 10h18M11 15h26M11 20h26M11 25h26M11 30h26M11 35h26M11 40h20M11 10v31M19 10v31M28 10v31M37 15v18" stroke="#cfcfcf" strokeWidth="1.5" fill="none" />
    <path d="M36 31h8v7h7v8h-7v7h-8v-7h-7v-8h7z" fill="#b3dd52" stroke="#86b82c" strokeWidth="1.4" />
    <path d="M38 33h4v7h7" fill="none" stroke="#dcf3a0" strokeWidth="1.5" />
  </svg>
);

const GearIcon = () => (
  <svg width="58" height="58" viewBox="0 0 58 58" aria-hidden="true">
    {Array.from({ length: 8 }, (_, i) => (
      <path
        key={i}
        d="M23 14L25 2.5h8L35 14z"
        fill="url(#silver)"
        stroke="#98a3a4"
        strokeWidth="1"
        transform={`rotate(${i * 45} 29 29)`}
      />
    ))}
    <circle cx="29" cy="29" r="19.5" fill="url(#silver)" />
    <circle cx="29" cy="29" r="15.5" fill="#8f9b9c" />
    <circle cx="29" cy="30" r="14" fill="#c3cacb" />
    <circle cx="29" cy="29" r="10" fill="#fdfdfd" stroke="#7d898a" strokeWidth="1.5" />
  </svg>
);

const ExitIcon = () => (
  <svg width="42" height="42" viewBox="0 0 42 42" aria-hidden="true">
    <path d="M11 1l10 11L31 1l10 9-11 11 11 11-10 9-10-11-10 11L1 32l11-11L1 10z" fill="url(#cross)" stroke="#4aa3d8" strokeWidth="0.8" />
  </svg>
);

// ---------- Components ----------

function CloseButton({ wide }) {
  return (
    <CaptionButton $wide={wide} aria-label="Close">
      <CloseGlyph />
    </CaptionButton>
  );
}

function SensorRow({ data, index }) {
  const { kind, depth, icon, label, values, toggle } = data;
  let tone = index % 2 ? "odd" : "none";
  if (kind === "group") tone = "group";
  if (kind === "empty") tone = "none";
  const watched = /Throttling/.test(label);

  return (
    <Row>
      <NameCell $depth={depth} $shade={tone}>
        {label && (
          <NameLine $depth={depth}>
            {toggle ? (
              <Toggle aria-label={toggle === "open" ? "Collapse" : "Expand"}>
                <ToggleGlyph open={toggle === "open"} />
              </Toggle>
            ) : (
              <span />
            )}
            {rowIcons[icon]}
            <Label $group={kind === "group"}>{label}</Label>
          </NameLine>
        )}
      </NameCell>
      {[0, 1, 2, 3].map((i) => (
        <ValueCell key={i} $shade={tone} $alert={watched && values[i] === "Yes"}>
          {values[i]}
        </ValueCell>
      ))}
      <FillCell />
    </Row>
  );
}

function SensorPane({ rows, widths }) {
  return (
    <Pane>
      <SensorTable>
        <colgroup>
          <col />
          {widths.map((w, i) => (
            <Col key={i} $width={w} />
          ))}
        </colgroup>
        <thead>
          <tr>
            <HeadCell $align="left">Sensor</HeadCell>
            <HeadCell>Current</HeadCell>
            <HeadCell>Minimum</HeadCell>
            <HeadCell>Maximum</HeadCell>
            <HeadCell>Average</HeadCell>
            <HeadCell as="td" $last />
          </tr>
        </thead>
        <tbody>
          {rows.map((data, i) => (
            <SensorRow key={i} data={data} index={i} />
          ))}
        </tbody>
      </SensorTable>
    </Pane>
  );
}

const PLOT_WIDTH = 1718;
const TRACE_START = 45;
const GRID = 28;

function GraphPlot({ graph }) {
  const { plot, frame, trace, line, fill, shaded } = graph;
  const [left, top, right, bottom] = frame;
  const base = plot - 2;
  const px = (x) => TRACE_START + ((x - left) / (right - left)) * (PLOT_WIDTH - TRACE_START);
  const py = (y) => base - ((y - bottom) / (top - bottom)) * plot;

  const path = trace.map(([x, y]) => `H${px(x).toFixed(1)}V${py(y).toFixed(1)}`).join("");
  const first = `${px(trace[0][0])} ${py(trace[0][1])}`;

  const columns = [];
  for (let x = PLOT_WIDTH - 20; x > TRACE_START + GRID; x -= GRID) columns.push(x);
  columns.push(TRACE_START, TRACE_START - GRID);
  const rules = [];
  for (let y = base; y > 0; y -= GRID) rules.push(y);

  return (
    <Plot
      $shaded={shaded}
      viewBox={`0 0 ${PLOT_WIDTH} ${plot}`}
      preserveAspectRatio="none"
      role="img"
      aria-label={graph.title}
    >
      <path d={`M${TRACE_START} ${plot}V${base}${path}H${PLOT_WIDTH}V${plot}z`} fill={fill} />
      <g stroke="#adc6ea" strokeWidth="2" opacity="0.85">
        {columns.map((x) => (
          <path key={x} d={`M${x} 0V${plot}`} />
        ))}
        {rules.map((y) => (
          <path key={y} d={`M0 ${y}H${PLOT_WIDTH}`} />
        ))}
      </g>
      <path d={`M${first}${path}H${PLOT_WIDTH}`} fill="none" stroke={line} strokeWidth="2" />
    </Plot>
  );
}

function GraphWindow({ graph }) {
  const { title, max, min, value, line, raised, shaded } = graph;
  return (
    <Window $raised={raised}>
      <TitleBar $shaded={shaded}>
        <LogoIcon />
        <Title as="h2">{title}</Title>
        <CloseButton />
      </TitleBar>
      <GraphBody>
        <GraphPlot graph={graph} />
        <Side>
          <Field aria-label={`${title} upper bound`} defaultValue={max} />
          <Swatches>
            <Swatch $color={line} aria-label="Line colour" />
            <Swatch $color="#e0f7fd" aria-label="Background colour" />
            <Swatch $color="#adc6ea" aria-label="Grid colour" />
          </Swatches>
          <ValueField aria-label={`${title} value`} value={value} readOnly />
          <Actions>
            <Action $width={71}>Auto Fit</Action>
            <Action $width={53}>Reset</Action>
          </Actions>
          <Field aria-label={`${title} lower bound`} defaultValue={min} />
        </Side>
      </GraphBody>
    </Window>
  );
}

export default function App() {
  return (
    <>
      <GlobalStyle />
      <SharedGradients />
      <Desktop>
        <SensorWindow>
          <TitleBar $main>
            <LogoIcon />
            <Title>HWiNFO64 v7.40-5000 Sensor Status [217 values hidden]</Title>
            <CaptionButtons>
              <CaptionButton $wide aria-label="Minimize">
                <MinimizeGlyph />
              </CaptionButton>
              <CaptionButton $wide aria-label="Maximize">
                <MaximizeGlyph />
              </CaptionButton>
              <CloseButton wide />
            </CaptionButtons>
          </TitleBar>
          <Panes>
            <SensorPane rows={leftRows} widths={[137, 120, 129, 125, 40]} />
            <SensorPane rows={rightRows} widths={[128, 117, 123, 122, 6]} />
          </Panes>
          <Toolbar>
            <ToolButton aria-label="Expand all">
              <ExpandIcon />
            </ToolButton>
            <ToolButton aria-label="Shrink all">
              <ShrinkIcon />
            </ToolButton>
            <Spacer />
            <ToolButton $after={12} aria-label="System summary">
              <InspectIcon />
            </ToolButton>
            <ToolButton aria-label="Remote monitoring">
              <NetworkIcon />
            </ToolButton>
            <Elapsed>0:12:56</Elapsed>
            <ToolButton aria-label="Reset timer">
              <ClockIcon />
            </ToolButton>
            <ToolButton aria-label="Log to file">
              <ReportIcon />
            </ToolButton>
            <ToolButton aria-label="Settings">
              <GearIcon />
            </ToolButton>
            <ToolButton aria-label="Close sensors">
              <ExitIcon />
            </ToolButton>
          </Toolbar>
        </SensorWindow>
        <GraphStack>
          {graphs.map((graph) => (
            <GraphWindow key={graph.title} graph={graph} />
          ))}
        </GraphStack>
      </Desktop>
    </>
  );
}
